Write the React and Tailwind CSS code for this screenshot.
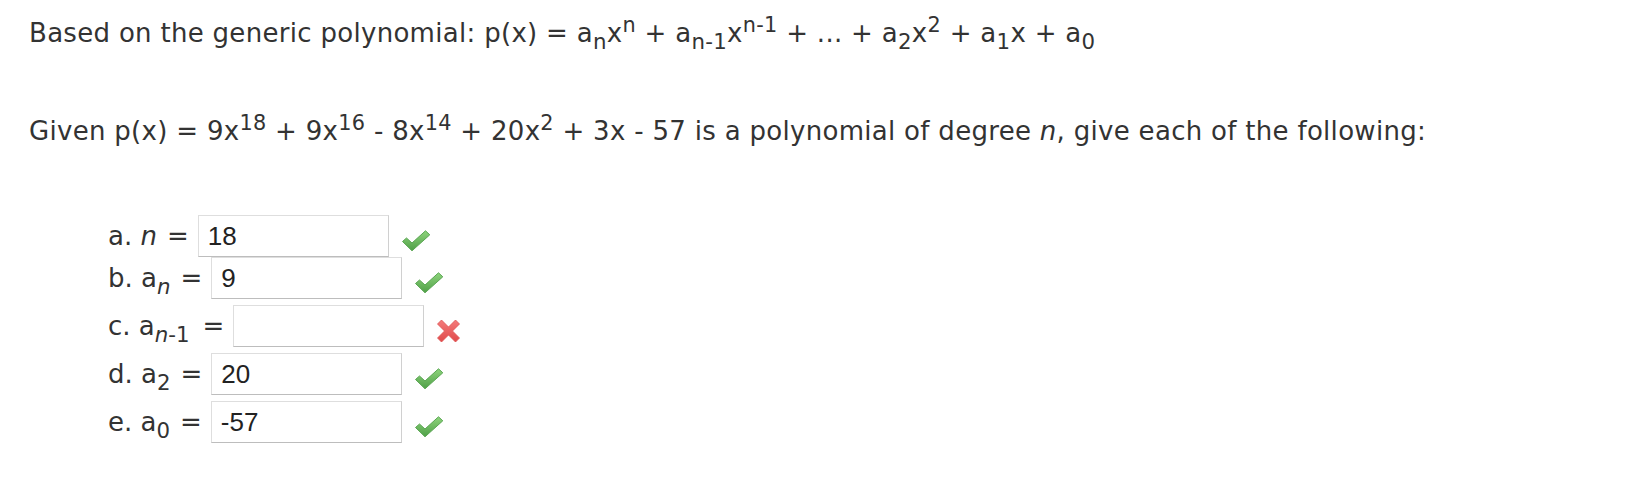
import React from "react";

const Check = () => (
  <svg width="30" height="23" viewBox="0 0 30 23" className="shrink-0">
    <defs>
      <linearGradient id="cg" x1="0" y1="0" x2="0" y2="1">
        <stop offset="0" stopColor="#8ed47c" />
        <stop offset="1" stopColor="#4f9f47" />
      </linearGradient>
    </defs>
    <path d="M1.5 12.5 L5.5 9 L11 14 L24.5 1.8 L28.8 5.8 L11 21.8 Z" fill="url(#cg)" stroke="#5aa653" strokeWidth="1" strokeLinejoin="round" />
  </svg>
);

const Cross = () => (
  <svg width="25" height="26" viewBox="0 0 25 26" className="shrink-0">
    <defs>
      <linearGradient id="xg" x1="0" y1="0" x2="0" y2="1">
        <stop offset="0" stopColor="#f47b7b" />
        <stop offset="1" stopColor="#e04a4a" />
      </linearGradient>
    </defs>
    <path d="M1.5 6 L5.5 2 L12.5 9 L19.5 2 L23.5 6 L16.5 13 L23.5 20 L19.5 24 L12.5 17 L5.5 24 L1.5 20 L8.5 13 Z" fill="url(#xg)" stroke="#dd5252" strokeWidth="0.8" strokeLinejoin="round" />
  </svg>
);

const Sub = ({ children, i }) => (
  <sub className={`text-[0.82em] relative top-[0.33em] align-baseline ${i ? "italic" : ""}`}>{children}</sub>
);
const Sup = ({ children }) => (
  <sup className="text-[0.8em] relative -top-[0.46em] align-baseline">{children}</sup>
);

const Answer = ({ label, value, ok, className = "" }) => (
  <div className={`flex items-center ${className}`}>
    <span className="whitespace-pre">{label}</span>
    <span className="ml-[10px]">=</span>
    <div className="ml-[9px] w-[191px] h-[42px] bg-white border border-[#dedede] border-b-[#bdbdbd] border-r-[#d0d0d0] flex items-center pl-[9px] text-[26px] text-[#222] font-['Liberation_Sans',Arial,sans-serif]">
      {value}
    </div>
    <div className="ml-[12px] mt-[9px]">{ok ? <Check /> : <Cross />}</div>
  </div>
);

export default function App() {
  return (
    <div className="w-[1628px] h-[502px] bg-white text-[#333] text-[26px] tracking-[0.3px] font-['DejaVu_Sans',Verdana,sans-serif] pl-[29px] pt-[15px]">
      <p className="leading-[36px]">
        Based on the generic polynomial: p(x) = a<Sub>n</Sub>x<Sup>n</Sup> + a<Sub>n-1</Sub>x<Sup>n-1</Sup> + ... + a<Sub>2</Sub>x<Sup>2</Sup> + a<Sub>1</Sub>x + a<Sub>0</Sub>
      </p>
      <p className="leading-[36px] mt-[62px]">
        Given p(x) = 9x<Sup>18</Sup> + 9x<Sup>16</Sup> - 8x<Sup>14</Sup> + 20x<Sup>2</Sup> + 3x - 57 is a polynomial of degree <i>n</i>, give each of the following:
      </p>
      <div className="ml-[79px] mt-[66px] flex flex-col leading-[36px] tracking-normal">
        <Answer label={<>a. <i>n</i></>} value="18" ok />
        <Answer label={<>b. a<Sub i>n</Sub></>} value="9" ok />
        <Answer label={<>c. a<Sub><i>n</i>-1</Sub><span className="inline-block w-[3px]" /></>} value="" ok={false} className="mt-[6px]" />
        <Answer label={<>d. a<Sub>2</Sub></>} value="20" ok className="mt-[6px]" />
        <Answer label={<>e. a<Sub>0</Sub></>} value="-57" ok className="mt-[6px]" />
      </div>
    </div>
  );
}
